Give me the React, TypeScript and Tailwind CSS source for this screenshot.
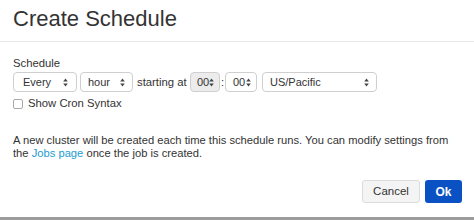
import React from "react";

function Arrows() {
  return (
    <svg width="5" height="9" viewBox="0 0 5 9" className="shrink-0">
      <path d="M2.5 0.5L4.8 3.6H0.2Z" fill="#444" />
      <path d="M2.5 8.5L4.8 5.4H0.2Z" fill="#444" />
    </svg>
  );
}

interface SelectBoxProps {
  value: string;
  width: string;
  pad?: string;
  gray?: boolean;
}

function SelectBox({ value, width, pad = "pl-[7px] pr-[7px]", gray }: SelectBoxProps) {
  return (
    <div
      className={`${width} ${pad} h-[20px] flex items-center justify-between rounded-[4px] border border-[#cfcfcf] shrink-0 ${
        gray ? "bg-[#ececec]" : "bg-white"
      }`}
    >
      <span className="text-[11px] leading-none text-[#333]">{value}</span>
      <Arrows />
    </div>
  );
}

export default function App() {
  return (
    <div
      className="w-[474px] h-[220px] bg-white flex flex-col text-[#333]"
      style={{ fontFamily: '"Liberation Sans", Arial, sans-serif' }}
    >
      <div className="h-[42px] border-b border-[#e8e8e8] px-[13px] pt-[5px] shrink-0">
        <h1 className="text-[22px] leading-[28px] text-[#333]">Create Schedule</h1>
      </div>

      <div className="px-[13px] pt-[14px] flex-1">
        <div className="text-[11.3px] leading-[15px]">Schedule</div>
        <div className="flex items-center mt-[1px] h-[20px]">
          <SelectBox value="Every" width="w-[64px]" pad="pl-[9px] pr-[8px]" />
          <div className="w-[3px]" />
          <SelectBox value="hour" width="w-[53px]" />
          <span className="text-[11.3px] ml-[4px] w-[53px] whitespace-nowrap">starting at</span>
          <SelectBox value="00" width="w-[30px]" pad="pl-[6px] pr-[5px]" gray />
          <span className="text-[11px] w-[5px] text-center">:</span>
          <SelectBox value="00" width="w-[32px]" pad="pl-[7px] pr-[5px]" />
          <div className="w-[5px]" />
          <SelectBox value="US/Pacific" width="w-[115px]" />
        </div>
        <label className="flex items-center mt-[4px] h-[15px]">
          <span className="w-[10px] h-[10px] border border-[#aaa] rounded-[2px] bg-white" />
          <span className="text-[11.3px] ml-[5px]">Show Cron Syntax</span>
        </label>
        <p className="text-[11.2px] leading-[13px] mt-[23px] whitespace-nowrap">
          A new cluster will be created each time this schedule runs. You can modify settings from
          <br />
          the <span className="text-[#1d9bd1]">Jobs page</span> once the job is created.
        </p>
      </div>

      <div className="flex justify-end items-center gap-[5px] pr-[12px] pb-[14px] shrink-0">
        <button className="w-[58px] h-[23px] rounded-[3px] border border-[#dcdcdc] bg-[#f4f4f4] text-[11.5px] text-[#333]">
          Cancel
        </button>
        <button className="w-[37px] h-[23px] rounded-[3px] bg-[#0a52c4] text-[12px] font-bold text-white">
          Ok
        </button>
      </div>
      <div className="h-[3px] bg-[#9c9c9c] shrink-0" />
    </div>
  );
}
